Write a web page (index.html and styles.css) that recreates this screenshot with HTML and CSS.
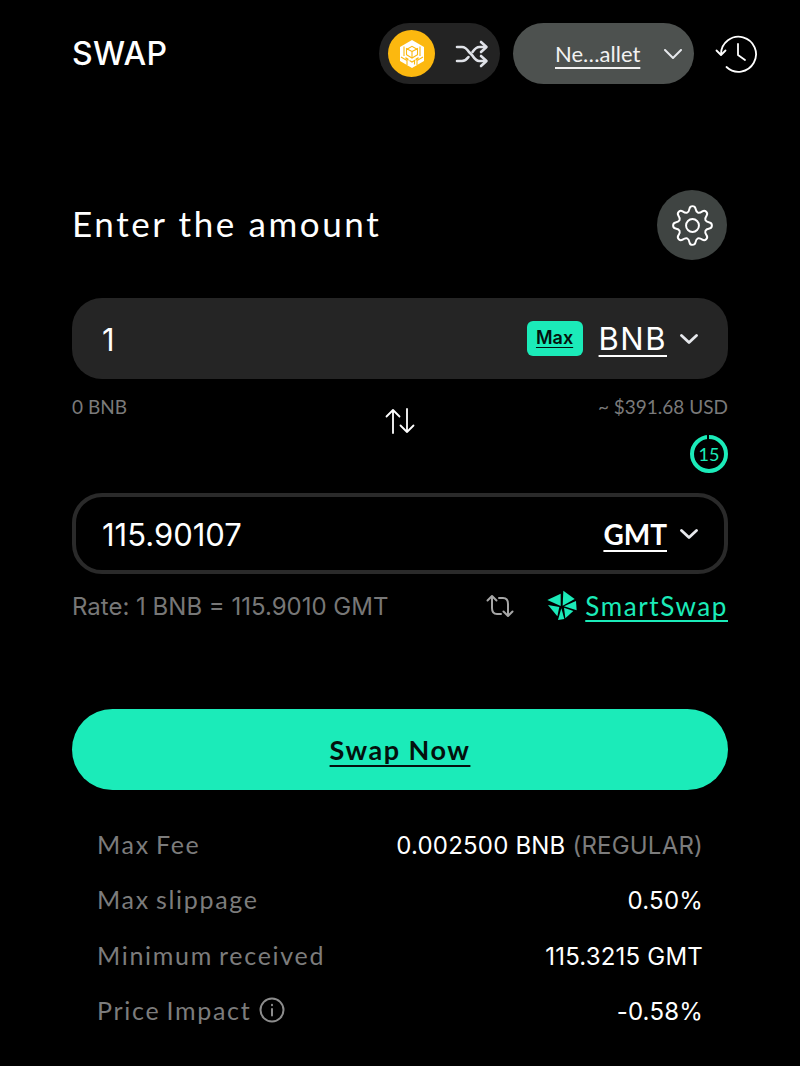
FILE: index.html
```html
<!DOCTYPE html>
<html lang="en">
<head>
    <meta charset="UTF-8">
    <meta name="viewport" content="width=device-width, initial-scale=1.0">
    <title>Swap</title>
    <link rel="stylesheet" href="styles.css">
</head>
<body>
    <!-- Header -->
    <div class="header">
        <div class="page-name">SWAP</div>
        <div class="chain-pill">
            <div class="chain-icon">
                <svg viewBox="0 0 26 30" width="26" height="30">
                    <path d="M13 1l12 7v14l-12 7-12-7V8z" fill="#fff"/>
                    <g fill="none" stroke="#fcb80f" stroke-width="1.100">
                        <path d="M7.500 10.500L13 7.300l5.500 3.200"/>
                        <path d="M5 7.500v9.500M21 7.500v9.500"/>
                        <path d="M13 12.500l5.500-2.800v6L13 19l-5.500-3.300v-6z"/>
                        <path d="M13 12.500V19"/>
                        <path d="M2 18l6 3.500v4.500M24 18l-6 3.500v4.500"/>
                        <path d="M10.500 21.500l2.500 1.500 2.500-1.500v4"/>
                    </g>
                    <path d="M6.500 18l3 1.700v2l-3-1.700zM19.500 18l-3 1.700v2l3-1.700z" fill="#fcb80f"/>
                </svg>
            </div>
            <svg class="shuffle-icon" viewBox="0 0 34 28" width="34" height="28" fill="none" stroke="#e0e2e8" stroke-width="2.600" stroke-linecap="round" stroke-linejoin="round">
                <path d="M2 7h5c3 0 5 2 7 5l3 3c2 3 4 6 7 6h6"/>
                <path d="M2 21h5c3 0 5-2 6.500-4M17.500 12c2-3 4-5 7-5h6"/>
                <path d="M26 2l5.500 5-5.500 5M26 16l5.500 5-5.500 5"/>
            </svg>
        </div>
        <div class="wallet-pill">
            <span class="wallet-name">Ne…allet</span>
            <svg class="chevron" viewBox="0 0 18 10" width="18" height="10"><path d="M1 1l8 8 8-8"/></svg>
        </div>
        <svg class="history-icon" viewBox="0 0 42 40" width="42" height="40" fill="none" stroke="#fff" stroke-width="1.800" stroke-linecap="round" stroke-linejoin="round">
            <path d="M6 20a17.500 17.500 0 1 1 5.500 13"/>
            <path d="M1.500 16.500L6 21l4.500-4.500"/>
            <path d="M23 10v11l7 5"/>
        </svg>
    </div>

    <div class="title-row">
        <div class="title">Enter the amount</div>
        <div class="settings-button">
            <svg viewBox="0 0 24 24" width="43" height="43" fill="none" stroke="#fff" stroke-width="1.100" stroke-linejoin="round">
                <circle cx="12" cy="12" r="3.600"/>
                <path d="M10.333 2.546A1.700 1.700 0 0 1 13.667 2.546Q14.373 6.272 17.506 4.136A1.700 1.700 0 0 1 19.864 6.494Q17.728 9.627 21.454 10.333A1.700 1.700 0 0 1 21.454 13.667Q17.728 14.373 19.864 17.506A1.700 1.700 0 0 1 17.506 19.864Q14.373 17.728 13.667 21.454A1.700 1.700 0 0 1 10.333 21.454Q9.627 17.728 6.494 19.864A1.700 1.700 0 0 1 4.136 17.506Q6.272 14.373 2.546 13.667A1.700 1.700 0 0 1 2.546 10.333Q6.272 9.627 4.136 6.494A1.700 1.700 0 0 1 6.494 4.136Q9.627 6.272 10.333 2.546Z"/>
            </svg>
        </div>
    </div>

    <!-- From amount -->
    <div class="amount-box from-box">
        <div class="amount-value">1</div>
        <div class="max-button">Max</div>
        <div class="token-name from-token">BNB</div>
        <svg class="chevron token-chevron" viewBox="0 0 18 10" width="18" height="10"><path d="M1.500 1.500l7.500 7 7.500-7"/></svg>
    </div>

    <div class="middle-row">
        <div class="balance">0 BNB</div>
        <svg class="flip-icon" viewBox="0 0 30 26" width="30" height="26" fill="none" stroke="#fff" stroke-width="1.800" stroke-linecap="round" stroke-linejoin="round">
            <path d="M8 25V2M1.500 8.500L8 2l6.500 6.500"/>
            <path d="M22 1v23M15.500 17.500L22 24l6.500-6.500"/>
        </svg>
        <div class="usd-value">~ $391.68 USD</div>
    </div>
    <div class="timer-row">
        <div class="timer">15</div>
    </div>

    <!-- To amount -->
    <div class="amount-box to-box">
        <div class="amount-value">115.90107</div>
        <div class="token-name to-token">GMT</div>
        <svg class="chevron token-chevron" viewBox="0 0 18 10" width="18" height="10"><path d="M1.500 1.500l7.500 7 7.500-7"/></svg>
    </div>

    <div class="rate-row">
        <div class="rate">Rate: 1 BNB = 115.9010 GMT</div>
        <svg class="refresh-icon" viewBox="0 0 28 24" width="28" height="24" fill="none" stroke="#a6a6a6" stroke-width="2" stroke-linecap="round" stroke-linejoin="round">
            <path d="M1.500 6.500L6 2l4.500 4.500M6 2.500V14c0 4 1.500 6 5 6h4"/>
            <path d="M26.500 17.500L22 22l-4.500-4.500M22 21.500V10c0-4-1.500-6-5-6h-4"/>
        </svg>
        <svg class="smart-logo" viewBox="18 15 96 96" width="32" height="32" fill="#1bebb9">
            <path d="M22 45l40-19v37z"/>
            <path d="M70 17l34 25-36 20z"/>
            <path d="M108 48l2 28-38-12z"/>
            <path d="M72 68l28 10-24 22z"/>
            <path d="M64 70l9 32-19 3z"/>
            <path d="M58 66l-6 28-28-34z"/>
        </svg>
        <div class="smart-swap">SmartSwap</div>
    </div>

    <div class="swap-button">Swap Now</div>

    <!-- Details -->
    <div class="details">
        <div class="detail-row">
            <div class="detail-label">Max Fee</div>
            <div class="detail-value">0.002500 BNB <span class="fee-type">(REGULAR)</span></div>
        </div>
        <div class="detail-row">
            <div class="detail-label">Max slippage</div>
            <div class="detail-value">0.50%</div>
        </div>
        <div class="detail-row">
            <div class="detail-label">Minimum received</div>
            <div class="detail-value">115.3215 GMT</div>
        </div>
        <div class="detail-row">
            <div class="detail-label">Price Impact
                <svg class="info-icon" viewBox="0 0 26 26" width="26" height="26" fill="none" stroke="#8c8c8c" stroke-width="2" stroke-linecap="round">
                    <circle cx="13" cy="13" r="11.500"/>
                    <path d="M13 12v6.500M13 7.800v.4"/>
                </svg>
            </div>
            <div class="detail-value">-0.58%</div>
        </div>
    </div>
</body>
</html>
```
FILE: styles.css
```css
* {margin: 0; padding: 0; box-sizing: border-box;}
body {font-family: "Inter", "Liberation Sans", sans-serif; background-color: #000; color: #fff; padding: 23px 72px 0 72px; height: 1066px; overflow: hidden;}

/* Header */
.header {display: flex; align-items: center; height: 61px;}
.page-name {font-size: 32px; font-weight: 500; letter-spacing: .3px; flex: 1; line-height: 61px;}
.chain-pill {width: 121px; height: 61px; border-radius: 31px; background: #232323; display: flex; align-items: center; padding-left: 9px; gap: 20px;}
.chain-icon {width: 47px; height: 47px; border-radius: 50%; background: #fcb80f; display: flex; align-items: center; justify-content: center;}
.wallet-pill {width: 181px; height: 61px; border-radius: 31px; background: #4d514f; margin-left: 13px; display: flex; align-items: center; padding-left: 42px;}
.wallet-name {font-family: "Lato", sans-serif; font-size: 22px; text-decoration: underline; text-underline-offset: 5px; width: 86px; white-space: nowrap; letter-spacing: 0; color: #f2f2f2;}
.chevron {fill: none; stroke: #e6e8ec; stroke-width: 2; stroke-linecap: round; stroke-linejoin: round;}
.wallet-pill .chevron {margin-left: 23px;}
.history-icon {margin: 0 -29px 0 21px;}

/* Title */
.title-row {display: flex; align-items: center; justify-content: space-between; margin: 106px 1px 0 0; height: 70px;}
.title {font-family: "Lato", sans-serif; font-size: 35px; letter-spacing: 2.600px; padding-bottom: 4px;}
.settings-button {width: 70px; height: 70px; border-radius: 50%; background: #3f4442; display: flex; align-items: center; justify-content: center;}

/* Amount boxes */
.amount-box {height: 81px; border-radius: 30px; display: flex; align-items: center; padding: 0 30px;}
.from-box {background: #252525; margin-top: 38px;}
.to-box {border: 4px solid #2a2a2a; padding: 0 26px; margin-top: 20px;}
.amount-value {flex: 1; font-size: 31px; line-height: 40px; padding-top: 2px;}
.max-button {width: 56px; height: 35px; border-radius: 6px; background: #1bebb9; color: #04110d; font-size: 18px; font-weight: 600; text-align: center; line-height: 34px; text-decoration: underline; text-underline-offset: 3px; text-decoration-thickness: 1px; margin-right: 16px;}
.token-name {font-size: 31px; text-decoration: underline; text-underline-offset: 5px; text-decoration-thickness: 2px;}
.from-token {letter-spacing: 1.500px;}
.to-token {font-family: "Lato", sans-serif; font-weight: 700; font-size: 28px;}
.token-chevron {margin-left: 13px; stroke-width: 2.800;}

.middle-row {display: flex; justify-content: space-between; align-items: flex-start; height: 56px; padding-top: 17px; font-family: "Lato", sans-serif; font-size: 19px; color: #7a7a7a;}
.balance {width: 200px; line-height: 22px;}
.flip-icon {margin-top: 12px;}
.usd-value {width: 200px; text-align: right; line-height: 22px;}
.timer-row {display: flex; justify-content: flex-end; height: 38px;}
.timer {width: 38px; height: 38px; border-radius: 50%; border: 4px solid #1bebb9; color: #1bebb9; font-family: "Lato", sans-serif; font-size: 18px; text-align: center; line-height: 30px; position: relative;}
.timer::before {content: ""; position: absolute; top: -5px; left: 13px; width: 2px; height: 6px; background: #000;}

/* Rate */
.rate-row {display: flex; align-items: center; height: 30px; margin-top: 17px;}
.rate {flex: 1; font-size: 24px; color: #777; font-weight: 400;}
.refresh-icon {margin-right: 32px;}
.smart-logo {margin-right: 7px;}
.smart-swap {font-family: "Lato", sans-serif; font-size: 26px; letter-spacing: 1.600px; color: #1bebb9; text-decoration: underline; text-underline-offset: 4px;}

.swap-button {height: 81px; border-radius: 41px; background: #1bebb9; margin-top: 88px; color: #04110d; font-family: "Lato", sans-serif; font-size: 27px; font-weight: 700; letter-spacing: 1.500px; text-align: center; line-height: 81px; text-decoration: underline; text-underline-offset: 5px;}

/* Details */
.details {margin-top: 26px; padding: 0 25px;}
.detail-row {display: flex; justify-content: space-between; align-items: center; height: 55.500px; font-size: 25px; font-family: "Lato", sans-serif; letter-spacing: 1.700px; word-spacing: -2px;}
.detail-label {color: #7c7c7c; display: flex; align-items: center; gap: 8px;}
.detail-value {color: #fff; font-family: "Inter", sans-serif; font-weight: 400; font-size: 24px; letter-spacing: .2px; word-spacing: 0; padding-top: 3px;}
.fee-type {color: #7c7c7c;}
```
